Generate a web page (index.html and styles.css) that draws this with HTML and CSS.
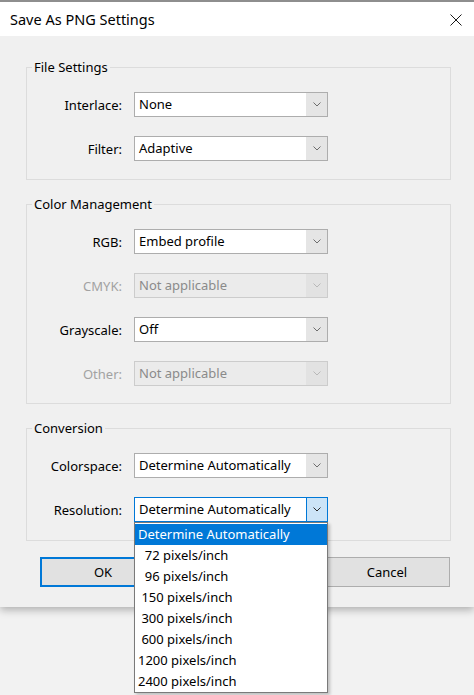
FILE: index.html
```html
<!DOCTYPE html>
<html lang="en">
<head>
<meta charset="utf-8">
<title>Save As PNG Settings</title>
<link rel="stylesheet" href="styles.css">
</head>
<body>
<div class="dialog">
  <div class="titlebar">
    <span class="title">Save As PNG Settings</span>
    <svg class="close" width="12" height="12" viewBox="0 0 12 12" aria-label="Close">
      <path d="M0.5 0.5 L11.5 11.5 M11.5 0.5 L0.5 11.5" stroke="#1a1a1a" stroke-width="1" fill="none"/>
    </svg>
  </div>

  <div class="content">
    <fieldset class="group">
      <legend>File Settings</legend>
      <div class="row">
        <span class="label">Interlace:</span>
        <div class="select"><span class="value">None</span><span class="arrow"><svg width="8" height="5" viewBox="0 0 8 5"><path d="M0.5 0.5 L4 4 L7.5 0.5" stroke="currentColor" fill="none"/></svg></span></div>
      </div>
      <div class="row">
        <span class="label">Filter:</span>
        <div class="select"><span class="value">Adaptive</span><span class="arrow"><svg width="8" height="5" viewBox="0 0 8 5"><path d="M0.5 0.5 L4 4 L7.5 0.5" stroke="currentColor" fill="none"/></svg></span></div>
      </div>
    </fieldset>

    <fieldset class="group group-color">
      <legend>Color Management</legend>
      <div class="row">
        <span class="label">RGB:</span>
        <div class="select"><span class="value">Embed profile</span><span class="arrow"><svg width="8" height="5" viewBox="0 0 8 5"><path d="M0.5 0.5 L4 4 L7.5 0.5" stroke="currentColor" fill="none"/></svg></span></div>
      </div>
      <div class="row disabled">
        <span class="label">CMYK:</span>
        <div class="select"><span class="value">Not applicable</span><span class="arrow"><svg width="8" height="5" viewBox="0 0 8 5"><path d="M0.5 0.5 L4 4 L7.5 0.5" stroke="currentColor" fill="none"/></svg></span></div>
      </div>
      <div class="row">
        <span class="label">Grayscale:</span>
        <div class="select"><span class="value">Off</span><span class="arrow"><svg width="8" height="5" viewBox="0 0 8 5"><path d="M0.5 0.5 L4 4 L7.5 0.5" stroke="currentColor" fill="none"/></svg></span></div>
      </div>
      <div class="row disabled">
        <span class="label">Other:</span>
        <div class="select"><span class="value">Not applicable</span><span class="arrow"><svg width="8" height="5" viewBox="0 0 8 5"><path d="M0.5 0.5 L4 4 L7.5 0.5" stroke="currentColor" fill="none"/></svg></span></div>
      </div>
    </fieldset>

    <fieldset class="group">
      <legend>Conversion</legend>
      <div class="row">
        <span class="label">Colorspace:</span>
        <div class="select"><span class="value">Determine Automatically</span><span class="arrow"><svg width="8" height="5" viewBox="0 0 8 5"><path d="M0.5 0.5 L4 4 L7.5 0.5" stroke="currentColor" fill="none"/></svg></span></div>
      </div>
      <div class="row">
        <span class="label">Resolution:</span>
        <div class="select open"><span class="value">Determine Automatically</span><span class="arrow"><svg width="8" height="5" viewBox="0 0 8 5"><path d="M0.5 0.5 L4 4 L7.5 0.5" stroke="currentColor" fill="none"/></svg></span>
          <ul class="options">
            <li class="selected">Determine Automatically</li>
            <li>  72 pixels/inch</li>
            <li>  96 pixels/inch</li>
            <li> 150 pixels/inch</li>
            <li> 300 pixels/inch</li>
            <li> 600 pixels/inch</li>
            <li>1200 pixels/inch</li>
            <li>2400 pixels/inch</li>
          </ul>
        </div>
      </div>
    </fieldset>

    <div class="buttons">
      <button class="btn btn-default">OK</button>
      <button class="btn">Cancel</button>
    </div>
  </div>
</div>
</body>
</html>
```

FILE: styles.css
```css
* {
  box-sizing: border-box;
}

html, body {
  margin: 0;
  padding: 0;
}

body {
  background: #f2f2f2;
  font-family: "Noto Sans", "Open Sans", sans-serif;
  font-size: 13px;
  color: #000;
  width: 474px;
  height: 695px;
  overflow: hidden;
}

.dialog {
  width: 474px;
  background: #f0f0f0;
  border-top: 2px solid #8e8e8e;
  box-shadow: 0 3px 8px rgba(0, 0, 0, 0.28);
}

/* Title bar */
.titlebar {
  height: 34px;
  background: #fff;
  display: flex;
  align-items: center;
  justify-content: space-between;
  padding: 0 12px 0 10px;
}

.title {
  font-size: 14.5px;
  color: #000;
}

.close {
  display: block;
  margin-top: 2px;
}

/* Dialog body */
.content {
  padding: 22px 0 20px;
}

.group {
  margin: 0 23px 15px 26px;
  padding: 16px 0 18px;
  border: 1px solid #dcdcdc;
  min-width: 0;
}

.group-color {
  padding-bottom: 17px;
}

.group legend {
  margin-left: 5px;
  padding: 0 2px;
  font-size: 13px;
  line-height: 18px;
  color: #000;
}

.row {
  display: grid;
  grid-template-columns: 95px 194px;
  column-gap: 12px;
  align-items: center;
  height: 25px;
}

.row + .row {
  margin-top: 19px;
}

.label {
  text-align: right;
  color: #000;
}

.select {
  position: relative;
  height: 25px;
  display: flex;
  border: 1px solid #adadad;
  background: #fff;
}

.select .value {
  flex: 1;
  padding-left: 4px;
  line-height: 23px;
  white-space: nowrap;
}

.select .arrow {
  width: 21px;
  background: #e5e5e5;
  color: #6d6d6d;
  display: flex;
  align-items: center;
  justify-content: center;
}

.select .arrow svg {
  display: block;
}

/* Greyed-out rows */
.row.disabled .label {
  color: #a2a2a2;
}

.row.disabled .select {
  border-color: #cccccc;
  background: #ebebeb;
}

.row.disabled .select .value {
  color: #8a8a8a;
}

.row.disabled .select .arrow {
  background: #e2e2e2;
  color: #b8b8b8;
}

/* Open combo box */
.select.open {
  border-color: #0078d7;
}

.select.open .arrow {
  background: #cce4f7;
  border-left: 1px solid #0078d7;
  color: #2b2b2b;
}

.options {
  position: absolute;
  left: -1px;
  top: 24px;
  width: 194px;
  margin: 0;
  padding: 1px 0 0;
  list-style: none;
  background: #fff;
  border: 1px solid #7a7a7a;
  box-shadow: 2px 2px 3px rgba(0, 0, 0, 0.22);
  z-index: 5;
}

.options li {
  height: 21px;
  line-height: 21px;
  padding-left: 3px;
  white-space: pre;
  color: #000;
}

.options li.selected {
  background: #0078d7;
  color: #fff;
}

/* Footer buttons */
.buttons {
  display: flex;
  justify-content: space-between;
  padding: 1px 24px 0 40px;
}

.btn {
  width: 126px;
  height: 30px;
  font-family: inherit;
  font-size: 13px;
  color: #000;
  background: #e1e1e1;
  border: 1px solid #adadad;
  padding: 0;
}

.btn-default {
  border: 2px solid #0078d7;
}
```
